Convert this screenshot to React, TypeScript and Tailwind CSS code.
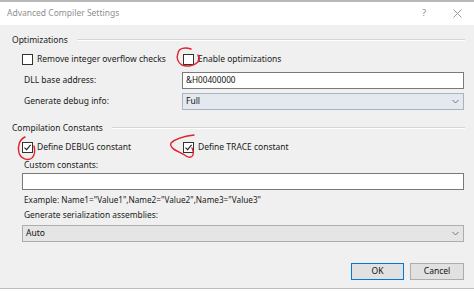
import React from 'react';

const font = { fontFamily: '"Noto Sans", "Open Sans", sans-serif' };

function Check({ on }: { on?: boolean }) {
  return (
    <span className="w-[11px] h-[11px] border border-[#333] bg-white flex items-center justify-center shrink-0">
      {on && (
        <svg width="9" height="9" viewBox="0 0 9 9">
          <path d="M1.5 4.6 L3.6 6.7 L7.6 1.8" fill="none" stroke="#222" strokeWidth="1.1" />
        </svg>
      )}
    </span>
  );
}

function Group({ title, mt }: { title: string; mt: string }) {
  return (
    <div className={`flex items-center h-[12px] pl-[12px] pr-[9px] ${mt}`}>
      <span className="text-[8.5px] text-[#1a1a1a] leading-none">{title}</span>
      <div className="flex-1 ml-[9px] border-t border-[#d6d6d6] border-b border-b-white" />
    </div>
  );
}

function Box({ text, mt, cls }: { text?: string; mt: string; cls: string }) {
  return (
    <div className={`h-[17px] bg-white border border-[#7a7a7a] flex items-center pl-[3px] text-[8.2px] text-[#111] ${mt} ${cls}`}>
      {text}
    </div>
  );
}

function Drop({ text, mt, cls, tone }: { text: string; mt: string; cls: string; tone: string }) {
  return (
    <div className={`h-[17px] border flex items-center justify-between pl-[3px] pr-[4px] text-[8.5px] text-[#111] ${tone} ${mt} ${cls}`}>
      <span>{text}</span>
      <svg width="7" height="5" viewBox="0 0 7 5">
        <path d="M0.5 1 L3.5 4 L6.5 1" fill="none" stroke="#777" strokeWidth="1" />
      </svg>
    </div>
  );
}

export default function App() {
  return (
    <div className="relative w-[474px] h-[293px] bg-white" style={font}>
      <div className="h-[289px] border-t-2 border-[#b9b9b9] border-b border-b-[#bcbcbc] bg-[#f0f0f0] flex flex-col">
        <div className="h-[23px] bg-white flex items-center pl-[7px] pr-[12px] text-[#8f8f8f]">
          <span className="text-[8.5px] flex-1">Advanced Compiler Settings</span>
          <span className="text-[9.5px] mr-[27px]">?</span>
          <svg width="9" height="9" viewBox="0 0 9 9">
            <path d="M0.5 0.5 L8.5 8.5 M8.5 0.5 L0.5 8.5" stroke="#8f8f8f" strokeWidth="0.9" />
          </svg>
        </div>

        <Group title="Optimizations" mt="mt-[9px]" />
        <div className="flex items-center h-[12px] mt-[7px] pl-[22px] text-[8.5px] text-[#1a1a1a]">
          <div className="flex items-center w-[161px]">
            <Check />
            <span className="ml-[4px]">Remove integer overflow checks</span>
          </div>
          <div className="flex items-center">
            <Check />
            <span className="ml-[4px]">Enable optimizations</span>
          </div>
        </div>
        <div className="flex items-center mt-[7px] pl-[24px] pr-[10px]">
          <span className="w-[158px] text-[8.5px] text-[#1a1a1a]">DLL base address:</span>
          <Box text="&H00400000" mt="" cls="flex-1" />
        </div>
        <div className="flex items-center mt-[4px] pl-[24px] pr-[10px]">
          <span className="w-[158px] text-[8.5px] text-[#1a1a1a]">Generate debug info:</span>
          <Drop text="Full" mt="" cls="flex-1" tone="bg-[#e3e9ef] border-[#a9b4bf]" />
        </div>

        <Group title="Compilation Constants" mt="mt-[12px]" />
        <div className="flex items-center h-[12px] mt-[7px] pl-[22px] text-[8.5px] text-[#1a1a1a]">
          <div className="flex items-center w-[161px]">
            <Check on />
            <span className="ml-[4px]">Define DEBUG constant</span>
          </div>
          <div className="flex items-center">
            <Check on />
            <span className="ml-[4px]">Define TRACE constant</span>
          </div>
        </div>
        <div className="h-[12px] mt-[6px] pl-[24px] text-[8.5px] text-[#1a1a1a] leading-[12px]">Custom constants:</div>
        <Box mt="mt-[2px]" cls="ml-[22px] mr-[10px]" />
        <div className="h-[12px] mt-[4px] pl-[24px] text-[8.2px] text-[#1a1a1a] leading-[12px]">
          Example: Name1="Value1",Name2="Value2",Name3="Value3"
        </div>
        <div className="h-[12px] mt-[3px] pl-[24px] text-[8.4px] text-[#1a1a1a] leading-[12px]">
          Generate serialization assemblies:
        </div>
        <Drop text="Auto" mt="mt-[4px]" cls="ml-[22px] mr-[10px]" tone="bg-[#e5e5e5] border-[#adadad]" />

        <div className="flex justify-end gap-[6px] mt-[21px] pr-[10px]">
          <button className="w-[53px] h-[17px] bg-[#e1e1e1] border border-[#0078d7] text-[8.5px] text-[#111] leading-none">OK</button>
          <button className="w-[54px] h-[17px] bg-[#e1e1e1] border border-[#adadad] text-[8.5px] text-[#111] leading-none">Cancel</button>
        </div>
      </div>

      <svg className="absolute inset-0 pointer-events-none" width="474" height="293" viewBox="0 0 474 293">
        <g fill="none" stroke="#e1232b" strokeWidth="1.4" strokeLinecap="round">
          <path d="M191 49 C185 47 179 48 178 53 C176 58 178 63 182 65 C187 67 194 66 198 62 C199 60 199 57 198 55" />
          <path d="M25 137 C20 139 17 146 19 153 C21 159 28 161 32 158 C35 155 35 150 34 146" />
          <path d="M194 135 C186 136 176 138 171 143 C169 148 177 151 183 154 C187 157 191 159 193 155 C194 152 193 150 192 148" />
        </g>
      </svg>
    </div>
  );
}
